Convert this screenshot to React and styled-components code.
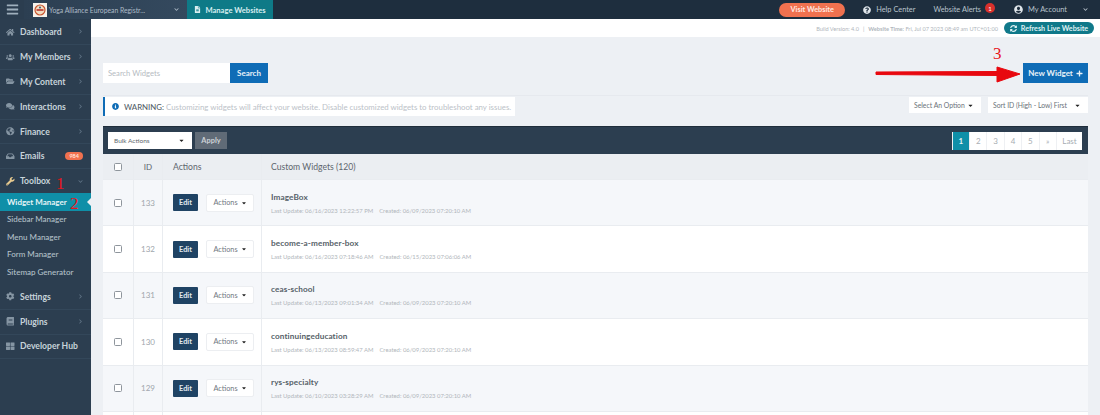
import React from 'react';
import styled, { createGlobalStyle } from 'styled-components';
import { FaHome, FaUsers, FaFolderOpen, FaComments, FaGlobeAmericas, FaInbox, FaWrench, FaCog, FaThLarge, FaBook, FaQuestionCircle, FaUserCircle, FaInfoCircle, FaSyncAlt, FaPlus, FaChevronRight, FaChevronDown, FaBars, FaFileAlt, FaCaretDown } from 'react-icons/fa';

const Global = createGlobalStyle`
  html, body { margin: 0; padding: 0; background: #edf0f4; overflow: hidden; }
  body { font-family: Lato, "Open Sans", sans-serif; }
  * { box-sizing: border-box; }
`;
const Page = styled.div`position: relative; width: 1100px; height: 415px; overflow: hidden; display: flex; flex-direction: column;`;
const TopBar = styled.header`height: 19px; background: #1e2e3e; display: flex; align-items: stretch; flex: none; color: #cfd6dc; font-size: 8.5px;`;
const Burger = styled.div`width: 24px; background: #2b3d4f; display: flex; align-items: center; justify-content: center; color: #9fb0bd; font-size: 13px;`;
const SiteSelect = styled.div`width: 163px; background: linear-gradient(90deg, #2c3f52, #34495e); display: flex; align-items: center; padding: 0 8px 0 9px; color: #aebbc6; font-size: 6.8px; white-space: nowrap;`;
const Logo = styled.svg`width: 14px; height: 14px; margin-right: 2px; flex: none;`;
const SiteName = styled.span`flex: 1;`;
const ManageTab = styled.div`width: 86px; background: #0e7a87; color: #d8eef0; display: flex; align-items: center; justify-content: center; gap: 4px; font-weight: 700; font-size: 7.6px;`;
const TopRight = styled.div`margin-left: auto; display: flex; align-items: center; padding-right: 12px; font-size: 7.4px; color: #b9c3cc;`;
const Visit = styled.div`width: 66px; height: 14px; border-radius: 7px; background: #f0714f; display: flex; align-items: center; justify-content: center; font-weight: 700; font-size: 7.3px; color: #ffe9e1; margin-right: 18px;`;
const TopLink = styled.div`display: flex; align-items: center; gap: 5px; margin-right: ${p => p.$mr}px; white-space: nowrap; svg { font-size: ${p => p.$size || 8}px; color: #dfe5ea; }`;
const AlertDot = styled.span`width: 10px; height: 10px; border-radius: 50%; background: #d9302c; color: #fff; font-size: 6px; display: flex; align-items: center; justify-content: center; margin-top: -3px; margin-left: -1px;`;
const Body = styled.div`flex: 1; display: flex; min-height: 0;`;
const Sidebar = styled.nav`width: 91px; flex: none; background: #2c3e50; display: flex; flex-direction: column; padding-top: 1px;`;
const NavItem = styled.div`height: 24.9px; flex: none; display: flex; align-items: center; padding: 0 8px 0 6px; color: #c7d3da; font-weight: 700; font-size: 8.6px; border-bottom: 1px solid #33475a; white-space: nowrap; position: relative;`;
const NavIcon = styled.span`width: 14px; display: flex; font-size: 8.5px; color: ${p => p.$color || '#8595a3'};`;
const NavLabel = styled.span`flex: 1;`;
const NavArrow = styled.span`font-size: 5px; color: #5f7385; display: flex;`;
const Badge = styled.span`background: #f0714f; color: #ffe3da; border-radius: 5px; font-size: 5.5px; font-weight: 700; padding: 1px 4px;`;
const SubList = styled.div`display: flex; flex-direction: column; padding-bottom: 4px; margin-top: -1px;`;
const SubItem = styled.div`height: 17.5px; display: flex; align-items: center; padding-left: 7px; font-size: 8px; color: ${p => p.$active ? '#e6f4f6' : '#b3c0c9'}; font-weight: ${p => p.$active ? 700 : 500}; background: ${p => p.$active ? '#0f8fa8' : 'transparent'}; position: relative;
  ${p => p.$active && `&::after { content: ''; position: absolute; right: 0; top: 4.5px; border: 4.5px solid transparent; border-right-color: #edf0f4; border-left: 0; }`}`;
const Main = styled.main`flex: 1; min-width: 0; display: flex; flex-direction: column;`;
const SubHeader = styled.div`height: 18px; flex: none; background: #fff; display: flex; align-items: center; justify-content: flex-end; padding-right: 6px; font-size: 5.6px; color: #b0b6bc; gap: 4px;`;
const RefreshBtn = styled.div`height: 12px; width: 90px; border-radius: 6px; background: #10798a; color: #dff1f3; display: flex; align-items: center; justify-content: center; gap: 4px; font-size: 7.2px; font-weight: 700; margin-left: 2px; svg { font-size: 7px; }`;
const Content = styled.div`flex: 1; padding: 26px 12px 0; display: flex; flex-direction: column; min-height: 0;`;
const SearchRow = styled.div`display: flex; flex: none; justify-content: space-between; align-items: flex-start; height: 26px; padding-bottom: 6px; border-bottom: 1px solid #e6e9ee; box-sizing: content-box;`;
const SearchGroup = styled.div`display: flex;`;
const SearchInput = styled.div`width: 127px; height: 20px; background: #fff; color: #b5bbc1; font-size: 7.6px; display: flex; align-items: center; padding-left: 5px;`;
const BlueBtn = styled.div`height: 20px; width: ${p => p.$w}px; background: #0f6cb6; color: #e8f1f8; font-weight: 700; font-size: 8px; display: flex; align-items: center; justify-content: center; gap: 3px; svg { font-size: 7px; }`;
const NoticeRow = styled.div`display: flex; justify-content: space-between; align-items: flex-start; height: 30px; padding-top: 1px; flex: none;`;
const Notice = styled.div`width: 412px; height: 19px; background: #fff; border-left: 2px solid #0f6cb6; display: flex; align-items: center; padding-left: 7px; font-size: 7.85px; color: #bcc2c8; white-space: nowrap; svg { color: #0f6cb6; font-size: 7px; margin-right: 5px; }`;
const NoticeStrong = styled.b`color: #555f69; font-weight: 500; margin-right: 2px;`;
const Selects = styled.div`display: flex; gap: 7px;`;
const Select = styled.div`width: ${p => p.$w}px; height: 16px; background: #fff; display: flex; align-items: center; justify-content: space-between; padding: 0 7px 0 5px; font-size: 6.8px; color: #6b7279; white-space: nowrap; svg { color: #222; font-size: 7px; }`;
const Table = styled.div`display: flex; flex: none; flex-direction: column; background: #fff;`;
const Toolbar = styled.div`height: 28px; background: #2c3e50; display: flex; align-items: center; padding: 0 6px 0 5px; border-top: 1px solid #1f2d3b; flex: none;`;
const BulkSelect = styled.div`width: 84px; height: 17px; background: #fff; display: flex; align-items: center; justify-content: space-between; padding: 0 7px 0 6px; font-size: 6.5px; color: #60676e; svg { color: #222; font-size: 7px; }`;
const ApplyBtn = styled.div`width: 32px; height: 17px; margin-left: 3px; background: #606b77; color: #ccd2d7; font-size: 7.4px; font-weight: 700; display: flex; align-items: center; justify-content: center;`;
const Pager = styled.div`margin-left: auto; display: flex; height: 18px; background: #fff;`;
const PageCell = styled.div`width: ${p => p.$w || 17.4}px; display: flex; align-items: center; justify-content: center; font-size: 8px; color: ${p => p.$active ? '#e5f3f6' : '#a7adb3'}; background: ${p => p.$active ? '#0f8fa8' : 'transparent'}; font-weight: ${p => p.$active ? 700 : 400}; border-left: 1px solid #eef0f3;`;
const Row = styled.div`display: grid; grid-template-columns: 31px 29px 99px 1fr; height: ${p => p.$h || 46.4}px; background: ${p => p.$bg}; border-bottom: 1px solid #e9ecf0; flex: none;`;
const Cell = styled.div`display: flex; align-items: center; justify-content: ${p => p.$center ? 'center' : 'flex-start'}; border-right: ${p => p.$last ? 0 : '1px solid #e9ecf0'}; padding-left: ${p => p.$pl || 0}px; color: ${p => p.$color || '#a0a6ac'}; font-size: ${p => p.$fs || 8}px; min-width: 0;`;
const Check = styled.span`width: 8px; height: 8px; border: 1px solid #8e959c; border-radius: 1.5px; background: #fff;`;
const EditBtn = styled.div`width: 25px; height: 17px; background: #1f4364; color: #e3eaf0; font-size: 7.3px; font-weight: 700; display: flex; align-items: center; justify-content: center; border-radius: 1px;`;
const ActionsBtn = styled.div`width: 48px; height: 18px; margin-left: 8px; background: #fff; border: 1px solid #eceef1; border-radius: 2px; display: flex; align-items: center; justify-content: center; gap: 3px; color: #71787f; font-size: 7.3px; svg { color: #222; font-size: 6px; }`;
const WidgetInfo = styled.div`display: flex; flex-direction: column; gap: 5px;`;
const WidgetName = styled.div`font-size: 8.2px; font-weight: 700; color: #565f68; letter-spacing: .1px;`;
const WidgetMeta = styled.div`font-size: 5.9px; color: #b1b6bb; display: flex; gap: 6px; white-space: nowrap;`;
const Mark = styled.span`position: absolute; left: ${p => p.$x}px; top: ${p => p.$y}px; color: #e8141c; font-family: "Liberation Serif", serif; font-size: 17px; line-height: 1;`;
const ArrowSvg = styled.svg`position: absolute; left: 874px; top: 60px; width: 150px; height: 26px;`;

const nav1 = [['Dashboard', FaHome], ['My Members', FaUsers], ['My Content', FaFolderOpen], ['Interactions', FaComments], ['Finance', FaGlobeAmericas]];
const nav2 = [['Settings', FaCog, true], ['Plugins', FaBook, true], ['Developer Hub', FaThLarge, false]];
const subs = ['Widget Manager', 'Sidebar Manager', 'Menu Manager', 'Form Manager', 'Sitemap Generator'];
const rows = [
  ['133', 'ImageBox', '06/16/2023 12:22:57 PM', '06/09/2023 07:20:10 AM', '#f5f7fa'],
  ['132', 'become-a-member-box', '06/16/2023 07:18:46 AM', '06/15/2023 07:06:06 AM', '#fff'],
  ['131', 'ceas-school', '06/13/2023 09:01:34 AM', '06/09/2023 07:20:10 AM', '#f5f7fa'],
  ['130', 'continuingeducation', '06/13/2023 08:59:47 AM', '06/09/2023 07:20:10 AM', '#fff'],
  ['129', 'rys-specialty', '06/10/2023 03:28:29 AM', '06/09/2023 07:20:10 AM', '#f5f7fa'],
];
const pages = ['1', '2', '3', '4', '5', '»'];

export default function App() {
  return (
    <Page>
      <Global />
      <TopBar>
        <Burger><FaBars /></Burger>
        <SiteSelect>
          <Logo viewBox="0 0 14 14"><rect width="14" height="14" fill="#f7f3ec" /><circle cx="7" cy="7" r="5" fill="#f1dcc0" stroke="#c9552e" strokeWidth="1.2" /><rect x="3.5" y="6.2" width="7" height="1.6" fill="#b8322a" /><circle cx="7" cy="4.6" r="1" fill="#3a5a78" /></Logo>
          <SiteName>Yoga Alliance European Registr...</SiteName>
          <FaChevronDown size={5} />
        </SiteSelect>
        <ManageTab><FaFileAlt size={7} />Manage Websites</ManageTab>
        <TopRight>
          <Visit>Visit Website</Visit>
          <TopLink $mr={18}><FaQuestionCircle />Help Center</TopLink>
          <TopLink $mr={19}>Website Alerts<AlertDot>1</AlertDot></TopLink>
          <TopLink $mr={16} $size={9}><FaUserCircle />My Account</TopLink>
          <FaChevronDown size={5} />
        </TopRight>
      </TopBar>
      <Body>
        <Sidebar>
          {nav1.map(([label, Icon]) => (
            <NavItem key={label}><NavIcon><Icon /></NavIcon><NavLabel>{label}</NavLabel><NavArrow><FaChevronRight /></NavArrow></NavItem>
          ))}
          <NavItem><NavIcon><FaInbox /></NavIcon><NavLabel>Emails</NavLabel><Badge>984</Badge></NavItem>
          <NavItem><NavIcon $color="#e6c98f"><FaWrench /></NavIcon><NavLabel>Toolbox</NavLabel><NavArrow><FaChevronDown /></NavArrow></NavItem>
          <SubList>
            {subs.map((s, i) => <SubItem key={s} $active={i === 0}>{s}</SubItem>)}
          </SubList>
          {nav2.map(([label, Icon, arrow]) => (
            <NavItem key={label}><NavIcon><Icon /></NavIcon><NavLabel>{label}</NavLabel>{arrow && <NavArrow><FaChevronRight /></NavArrow>}</NavItem>
          ))}
        </Sidebar>
        <Main>
          <SubHeader>
            <span>Build Version: 4.0</span><span>|</span>
            <span><b>Website Time:</b> Fri, Jul 07 2023 08:49 am UTC+01:00</span>
            <RefreshBtn><FaSyncAlt />Refresh Live Website</RefreshBtn>
          </SubHeader>
          <Content>
            <SearchRow>
              <SearchGroup>
                <SearchInput>Search Widgets</SearchInput>
                <BlueBtn $w={38}>Search</BlueBtn>
              </SearchGroup>
              <BlueBtn $w={65}>New Widget <FaPlus /></BlueBtn>
            </SearchRow>
            <NoticeRow>
              <Notice><FaInfoCircle /><NoticeStrong>WARNING:</NoticeStrong> Customizing widgets will affect your website. Disable customized widgets to troubleshoot any issues.</Notice>
              <Selects>
                <Select $w={72}>Select An Option <FaCaretDown /></Select>
                <Select $w={100}>Sort ID (High - Low) First <FaCaretDown /></Select>
              </Selects>
            </NoticeRow>
            <Table>
              <Toolbar>
                <BulkSelect>Bulk Actions <FaCaretDown /></BulkSelect>
                <ApplyBtn>Apply</ApplyBtn>
                <Pager>
                  {pages.map((p, i) => <PageCell key={p} $active={i === 0}>{p}</PageCell>)}
                  <PageCell $w={26}>Last</PageCell>
                </Pager>
              </Toolbar>
              <Row $h={26} $bg="#ebeef2">
                <Cell $center><Check /></Cell>
                <Cell $center $color="#5d656d">ID</Cell>
                <Cell $pl={10} $color="#5d656d" $fs={8.6}>Actions</Cell>
                <Cell $pl={9} $last $color="#5d656d" $fs={8.6}>Custom Widgets (120)</Cell>
              </Row>
              {rows.map(([id, name, upd, cre, bg]) => (
                <Row key={id} $bg={bg}>
                  <Cell $center><Check /></Cell>
                  <Cell $center>{id}</Cell>
                  <Cell $pl={10}><EditBtn>Edit</EditBtn><ActionsBtn>Actions <FaCaretDown /></ActionsBtn></Cell>
                  <Cell $pl={9} $last>
                    <WidgetInfo>
                      <WidgetName>{name}</WidgetName>
                      <WidgetMeta><span>Last Update: {upd}</span><span>Created: {cre}</span></WidgetMeta>
                    </WidgetInfo>
                  </Cell>
                </Row>
              ))}
              <Row $bg="#fff">
                <Cell /><Cell /><Cell /><Cell $last />
              </Row>
            </Table>
          </Content>
        </Main>
      </Body>
      <Mark $x={56} $y={175}>1</Mark>
      <Mark $x={70} $y={195}>2</Mark>
      <Mark $x={993} $y={45}>3</Mark>
      <ArrowSvg viewBox="0 0 150 26">
        <path d="M2 12 L123 11.5 L123 7 L146 14 L123 22 L123 15.5 L2 14.5 Z" fill="#e8080f" stroke="#e8080f" strokeLinejoin="round" />
      </ArrowSvg>
    </Page>
  );
}
